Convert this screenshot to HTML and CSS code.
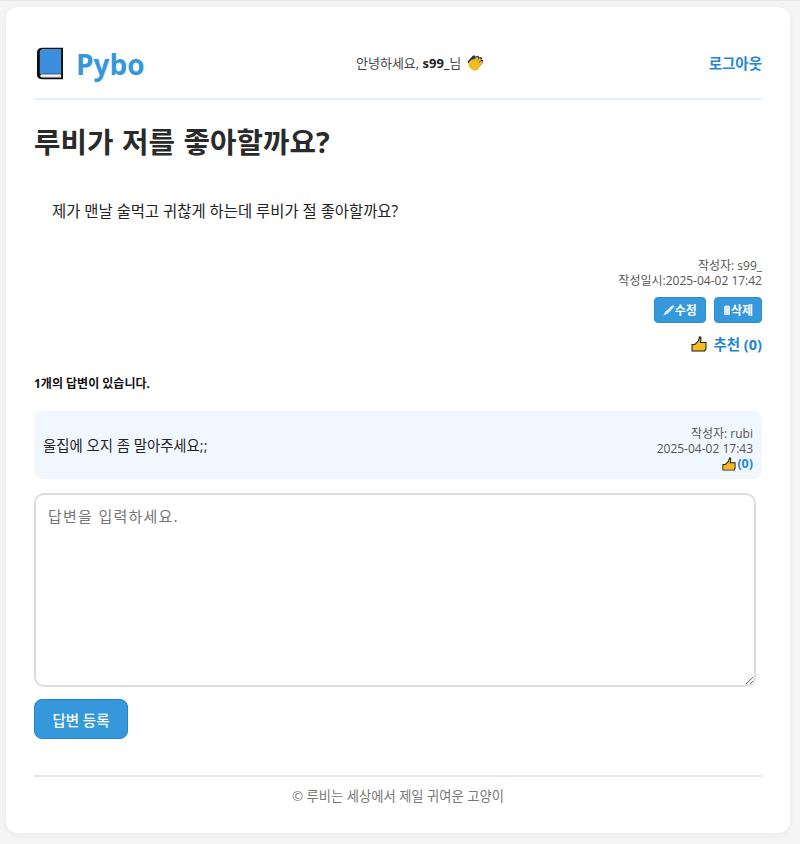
FILE: index.html
```html
<!DOCTYPE html>
<html lang="ko">
<head>
  <meta charset="UTF-8" />
  <meta name="viewport" content="width=device-width, initial-scale=1.0" />
  <title>Pybo</title>
  <link rel="stylesheet" href="styles.css">
</head>
<body>
  <div class="container">
    <header class="site-header">
      <a class="logo" href="#">
        <svg class="logo-icon" viewBox="0 0 28 34" width="26" height="33" aria-hidden="true">
          <path d="M6 0H28V34H6C2 34 0 32 0 29V5C0 2 2 0 6 0Z" fill="#0c0c0c"/>
          <path d="M6 1.500H26V28H6C5 28 4 28.300 3 29V5C3 3 4 1.500 6 1.500Z" fill="#3b8fdc"/>
          <path d="M6 28.500H26V32H6C4.500 32 3.500 31.300 3.500 30.200C3.500 29.200 4.500 28.500 6 28.500Z" fill="#e9edf2"/>
        </svg>
        <span>Pybo</span>
      </a>
      <div class="greeting">
        <span>안녕하세요, <strong>s99_</strong>님</span>
        <svg class="wave" viewBox="0 0 16 16" width="16" height="16" aria-hidden="true">
          <g transform="rotate(42 8 8)">
            <rect x="1.500" y="2.500" width="3.200" height="10" rx="1.600" fill="#1d3a4d"/>
            <rect x="4.500" y="0.500" width="3.200" height="11" rx="1.600" fill="#1d3a4d"/>
            <rect x="7.500" y="-0.500" width="3.200" height="11" rx="1.600" fill="#1d3a4d"/>
            <rect x="10.500" y="0.500" width="3.200" height="11" rx="1.600" fill="#1d3a4d"/>
            <rect x="3" y="5" width="11.500" height="10" rx="4.500" fill="#f5b921"/>
            <rect x="5.200" y="2" width="2.400" height="8" rx="1.200" fill="#f5b921"/>
            <rect x="8" y="1" width="2.400" height="8" rx="1.200" fill="#f5b921"/>
            <rect x="11" y="2" width="2.600" height="8" rx="1.200" fill="#f5b921"/>
          </g>
        </svg>
      </div>
      <a class="logout" href="#">로그아웃</a>
    </header>

    <h1 class="question-title">루비가 저를 좋아할까요?</h1>
    <p class="question-body">제가 맨날 술먹고 귀찮게 하는데 루비가 절 좋아할까요?</p>

    <div class="question-meta">
      <div>작성자: s99_</div>
      <div>작성일시:2025-04-02 17:42</div>
    </div>
    <div class="actions">
      <a class="btn-small" href="#">
        <svg viewBox="0 0 12 12" width="12" height="12" aria-hidden="true"><path d="M0.500 11.500L2 8L8.500 2C9.500 1.200 11.500 1.500 11.500 2.500L5 9.500Z" fill="#dfeaf5"/></svg>수정
      </a>
      <a class="btn-small" href="#">
        <svg viewBox="0 0 8 12" width="8" height="12" aria-hidden="true"><path d="M1 2.500C1 1 7 1 7 2.500V10C7 11.500 1 11.500 1 10Z" fill="#dfeaf5"/></svg>삭제
      </a>
    </div>
    <div class="vote-row">
      <svg class="thumb" viewBox="0 0 16 16" width="16" height="16" aria-hidden="true">
        <path d="M0.500 8H3.500L7 4.500L8 0.500H10C11 2 10.500 4 10 6H15.500V13L14 15.500H0.500Z" fill="#1c1c10"/>
        <path d="M1.500 9H4L8 5L9 1.500C9.800 2.800 9.300 5 8.800 7H14.500V12.500L13.300 14.500H1.500Z" fill="#f5b921"/>
      </svg>
      <a class="vote-link" href="#">추천 (0)</a>
    </div>

    <p class="answer-count">1개의 답변이 있습니다.</p>

    <div class="answer">
      <div class="answer-text">울집에 오지 좀 말아주세요;;</div>
      <div class="answer-meta">
        <div>작성자: rubi</div>
        <div>2025-04-02 17:43</div>
        <div class="answer-vote">
          <svg class="thumb" viewBox="0 0 16 16" width="14" height="14" aria-hidden="true">
            <path d="M0.500 8H3.500L7 4.500L8 0.500H10C11 2 10.500 4 10 6H15.500V13L14 15.500H0.500Z" fill="#1c1c10"/>
            <path d="M1.500 9H4L8 5L9 1.500C9.800 2.800 9.300 5 8.800 7H14.500V12.500L13.300 14.500H1.500Z" fill="#f5b921"/>
          </svg>
          <a class="vote-link" href="#">(0)</a>
        </div>
      </div>
    </div>

    <form class="answer-form">
      <textarea class="answer-input" placeholder="답변을 입력하세요."></textarea>
      <button class="submit-btn" type="button">답변 등록</button>
    </form>

    <footer class="site-footer">© 루비는 세상에서 제일 귀여운 고양이</footer>
  </div>
</body>
</html>
```

FILE: styles.css
```css
* { box-sizing: border-box; }
body { margin: 0; padding: 6px 10px 12px 6px; background-color: #f5f5f5; border-top: 1px solid #e4e4e4; color: #222; font-family: "Open Sans", "Noto Sans CJK KR", sans-serif; }
a { text-decoration: none; }
.container { background-color: #fff; border-radius: 12px; box-shadow: 0 2px 8px rgba(0, 0, 0, 0.05); padding: 40px 28px 24px; height: 826px; }

.site-header { display: flex; align-items: center; justify-content: space-between; height: 53px; padding-bottom: 18px; border-bottom: 2px solid #e3effc; }
.logo { display: flex; align-items: center; gap: 13px; margin-left: 3px; color: #3498db; font-size: 28px; font-weight: 700; }
.logo-icon { display: block; }
.greeting { display: flex; align-items: center; gap: 6px; margin: 0 14px 2px 0; font-size: 13px; color: #444; }
.greeting strong { color: #222; }
.wave { display: block; }
.logout { margin-bottom: 2px; color: #1f86d0; font-size: 14.500px; font-weight: 600; }

.question-title { margin: 22px 0 0; font-size: 28.800px; font-weight: 700; line-height: 40px; color: #2a2a2a; word-spacing: 1px; }
.question-body { margin: 39px 0 0; padding-left: 18px; font-size: 15.400px; line-height: 22px; color: #222; }

.question-meta { margin-top: 35px; text-align: right; font-size: 12px; line-height: 15px; color: #555; }
.actions { display: flex; justify-content: flex-end; gap: 8px; margin-top: 9px; }
.btn-small { display: flex; align-items: center; justify-content: center; height: 26px; padding: 0 8px; background-color: #3498db; border-radius: 4px; border: 1px solid #2b8fd3; color: #fff; font-size: 12px; font-weight: 700; }
.vote-row { display: flex; justify-content: flex-end; align-items: center; gap: 6px; margin-top: 10px; }
.vote-link { color: #1f86d0; font-size: 14.500px; font-weight: 700; }
.thumb { display: block; }

.answer-count { margin: 20px 0 0; font-size: 12px; line-height: 20px; font-weight: 700; color: #111; }
.answer { display: flex; align-items: center; justify-content: space-between; margin-top: 17px; height: 68px; padding: 0 9px; background-color: #f0f7ff; border-radius: 8px; }
.answer-text { margin-bottom: 2px; font-size: 14.400px; color: #222; }
.answer-meta { padding-top: 7px; text-align: right; font-size: 12px; line-height: 15px; color: #555; }
.answer-vote { display: flex; justify-content: flex-end; align-items: center; gap: 1px; }
.answer-vote .vote-link { font-size: 12.500px; }

.answer-form { margin-top: 14px; }
.answer-input { display: block; width: 722px; height: 194px; padding: 10px 12px; border: 2px solid #ddd; border-radius: 10px; font-family: "Noto Sans CJK KR", sans-serif; font-size: 15px; letter-spacing: 1.200px; }
.answer-input::placeholder { color: #777; }
.submit-btn { display: block; margin-top: 12px; width: 94px; height: 40px; background-color: #3498db; border: 1px solid #1f86d0; border-radius: 8px; color: #fff; font-family: inherit; font-size: 14.500px; font-weight: 500; }

.site-footer { margin-top: 36px; border-top: 2px solid #e6e6e6; padding-top: 9px; text-align: center; font-size: 13.300px; color: #777; }
```
